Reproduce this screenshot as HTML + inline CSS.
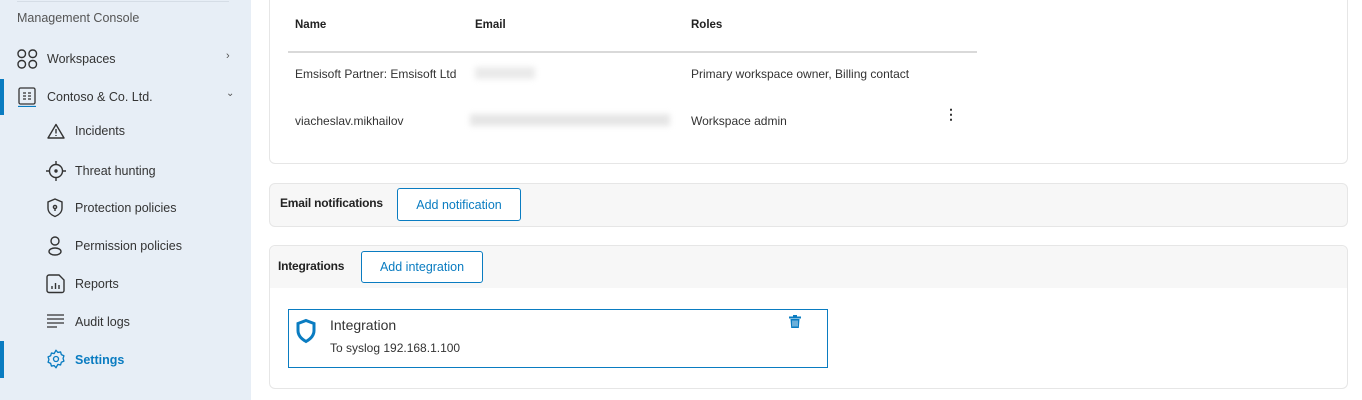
<!DOCTYPE html>
<html><head><style>
*{box-sizing:border-box;margin:0;padding:0}
body{width:1362px;height:400px;overflow:hidden;background:#fff;font-family:"Liberation Sans",sans-serif;font-size:13px;color:#2b2b2b;position:relative}
.sb{position:absolute;left:0;top:0;width:251px;height:400px;background:#e7eef6}
.sb .topline{position:absolute;left:17px;top:1px;width:212px;height:1px;background:#d5dde6}
.item{position:absolute;display:flex;align-items:center;font-size:12.5px;color:#333}
.bar{position:absolute;left:0;width:4px;background:#0a7cc1}
.card{position:absolute;left:269px;width:1079px;border:1px solid #e6e6e6;border-radius:6px;background:#fff}
.th{position:absolute;font-size:11.5px;font-weight:bold;color:#222}
.td{position:absolute;font-size:12px;color:#333}
.blur{position:absolute;background:#e6e6e6;filter:blur(3px);height:12px}
.btn{position:absolute;border:1px solid #0a7cc1;border-radius:3px;color:#0a7cc1;font-size:12.5px;display:flex;align-items:center;justify-content:center;background:#fff}
</style></head><body>
<div class="sb">
<div class="topline"></div>
<div class="item" style="left:17px;top:11px;color:#555">Management Console</div>
<svg style="position:absolute;left:17px;top:49px" width="21" height="20" viewBox="0 0 21 20" fill="none" stroke="#333" stroke-width="1.4"><rect x="1" y="1" width="7.5" height="7.5" rx="3.5"/><rect x="12" y="1" width="7.5" height="7.5" rx="3.5"/><rect x="1" y="11.5" width="7.5" height="7.5" rx="3.5"/><rect x="12" y="11.5" width="7.5" height="7.5" rx="3.5"/></svg>
<div class="item" style="left:47px;top:52px">Workspaces</div>
<div class="item" style="left:226px;top:50px;font-size:11px;color:#555">&#8250;</div>
<div class="bar" style="top:79px;height:36px"></div>
<svg style="position:absolute;left:18px;top:87px" width="18" height="20" viewBox="0 0 18 20" fill="none" stroke="#333" stroke-width="1.3"><rect x="1" y="1" width="16" height="16" rx="1.5"/><path d="M0 19.5H18" stroke="#0a7cc1"/><path d="M5 6h3M10 6h3M5 9h3M10 9h3M5 12h3M10 12h3"/></svg>
<div class="item" style="left:47px;top:90px">Contoso &amp; Co. Ltd.</div>
<div class="item" style="left:226px;top:88px;font-size:10px;color:#555">&#8964;</div>
<svg style="position:absolute;left:47px;top:123px" width="18" height="16" viewBox="0 0 18 16" fill="none" stroke="#333" stroke-width="1.4"><path d="M9 1.5L17 15H1Z" stroke-linejoin="round"/><path d="M9 6v4.5M9 12v1"/></svg>
<div class="item" style="left:75px;top:124px">Incidents</div>
<svg style="position:absolute;left:46px;top:161px" width="20" height="20" viewBox="0 0 20 20" fill="none" stroke="#333" stroke-width="1.4"><circle cx="10" cy="10" r="6.5"/><circle cx="10" cy="10" r="1" fill="#333"/><path d="M10 0v4M10 16v4M0 10h4M16 10h4"/></svg>
<div class="item" style="left:75px;top:164px">Threat hunting</div>
<svg style="position:absolute;left:47px;top:198px" width="16" height="20" viewBox="0 0 16 20" fill="none" stroke="#333" stroke-width="1.4"><path d="M8 1L15 4v6c0 4-3 7-7 8.5C4 17 1 14 1 10V4Z"/><circle cx="8" cy="9" r="1.6"/><path d="M8 10.5v2.5"/></svg>
<div class="item" style="left:75px;top:201px">Protection policies</div>
<svg style="position:absolute;left:47px;top:236px" width="16" height="20" viewBox="0 0 16 20" fill="none" stroke="#333" stroke-width="1.4"><circle cx="8" cy="5" r="4"/><ellipse cx="8" cy="15.5" rx="6" ry="3.5"/></svg>
<div class="item" style="left:75px;top:239px">Permission policies</div>
<svg style="position:absolute;left:46px;top:274px" width="19" height="20" viewBox="0 0 19 20" fill="none" stroke="#333" stroke-width="1.4"><path d="M3 1h10l5 5v10.5a2 2 0 0 1-2 2H3a2 2 0 0 1-2-2V3a2 2 0 0 1 2-2z"/><path d="M6 15v-3M9.5 15v-6M13 15v-4"/></svg>
<div class="item" style="left:75px;top:277px">Reports</div>
<svg style="position:absolute;left:47px;top:314px" width="18" height="14" viewBox="0 0 18 14" fill="none" stroke="#333" stroke-width="1.3"><path d="M0 1h17M0 5h17M0 9h17M0 13h10"/></svg>
<div class="item" style="left:75px;top:315px">Audit logs</div>
<div class="bar" style="top:341px;height:37px"></div>
<svg style="position:absolute;left:46px;top:349px" width="20" height="20" viewBox="0 0 24 24" fill="none" stroke="#0a7cc1" stroke-width="1.6"><circle cx="12" cy="12" r="3"/><path d="M12 1.5l2.2 2.6 3.3-.6.9 3.2 3.1 1.4-1 3.2 1 3.2-3.1 1.4-.9 3.2-3.3-.6L12 22.5l-2.2-2.6-3.3.6-.9-3.2-3.1-1.4 1-3.2-1-3.2 3.1-1.4.9-3.2 3.3.6z" stroke-linejoin="round"/></svg>
<div class="item" style="left:75px;top:353px;color:#0a7cc1;font-weight:bold">Settings</div>
</div>

<div class="card" style="top:-10px;height:174px">
<div class="th" style="left:25px;top:28px">Name</div>
<div class="th" style="left:205px;top:28px">Email</div>
<div class="th" style="left:421px;top:28px">Roles</div>
<div style="position:absolute;left:18px;top:60px;width:689px;height:2px;background:#d9d9d9"></div>
<div class="td" style="left:25px;top:76px">Emsisoft Partner: Emsisoft Ltd</div>
<div class="blur" style="left:205px;top:76px;width:60px;background:#eaeaea"></div>
<div class="td" style="left:421px;top:76px">Primary workspace owner, Billing contact</div>
<div class="td" style="left:25px;top:123px">viacheslav.mikhailov</div>
<div class="blur" style="left:200px;top:123px;width:200px"></div>
<div class="td" style="left:421px;top:123px">Workspace admin</div>
<div style="position:absolute;left:674px;top:121px;font-weight:bold;font-size:14px;line-height:5px;color:#333">&#8942;</div>
</div>

<div class="card" style="top:183px;height:44px;background:#f7f7f7">
<div style="position:absolute;left:10px;top:12px;font-weight:bold;font-size:12px;color:#222;letter-spacing:-0.2px">Email notifications</div>
<div class="btn" style="left:127px;top:4px;width:124px;height:33px">Add notification</div>
</div>

<div class="card" style="top:245px;height:144px">
<div style="position:absolute;left:0;top:0;right:0;height:42px;background:#f7f7f7;border-radius:6px 6px 0 0"></div>
<div style="position:absolute;left:8px;top:13px;font-weight:bold;font-size:12px;color:#222;letter-spacing:-0.2px">Integrations</div>
<div class="btn" style="left:91px;top:5px;width:122px;height:32px">Add integration</div>
<div style="position:absolute;left:18px;top:63px;width:540px;height:59px;border:1px solid #0a7cc1">
<svg style="position:absolute;left:7px;top:8px" width="20" height="26" viewBox="0 0 20 26" fill="none" stroke="#0a7cc1" stroke-width="3"><path d="M10 2.5L18 5.5v7c0 5-3.5 8.5-8 11-4.5-2.5-8-6-8-11v-7Z"/></svg>
<div style="position:absolute;left:41px;top:7px;font-size:14px;color:#333">Integration</div>
<div style="position:absolute;left:41px;top:31px;font-size:12px;color:#333">To syslog 192.168.1.100</div>
<svg style="position:absolute;left:500px;top:5px" width="12" height="13" viewBox="0 0 12 13" fill="#0a7cc1"><rect x="0" y="1.5" width="12" height="2"/><rect x="4" y="0" width="4" height="2"/><path d="M1.5 4h9l-.7 9H2.2z"/><path d="M4 5.5v6M6 5.5v6M8 5.5v6" stroke="#fff" stroke-width=".8"/></svg>
</div>
</div>
</body></html>
